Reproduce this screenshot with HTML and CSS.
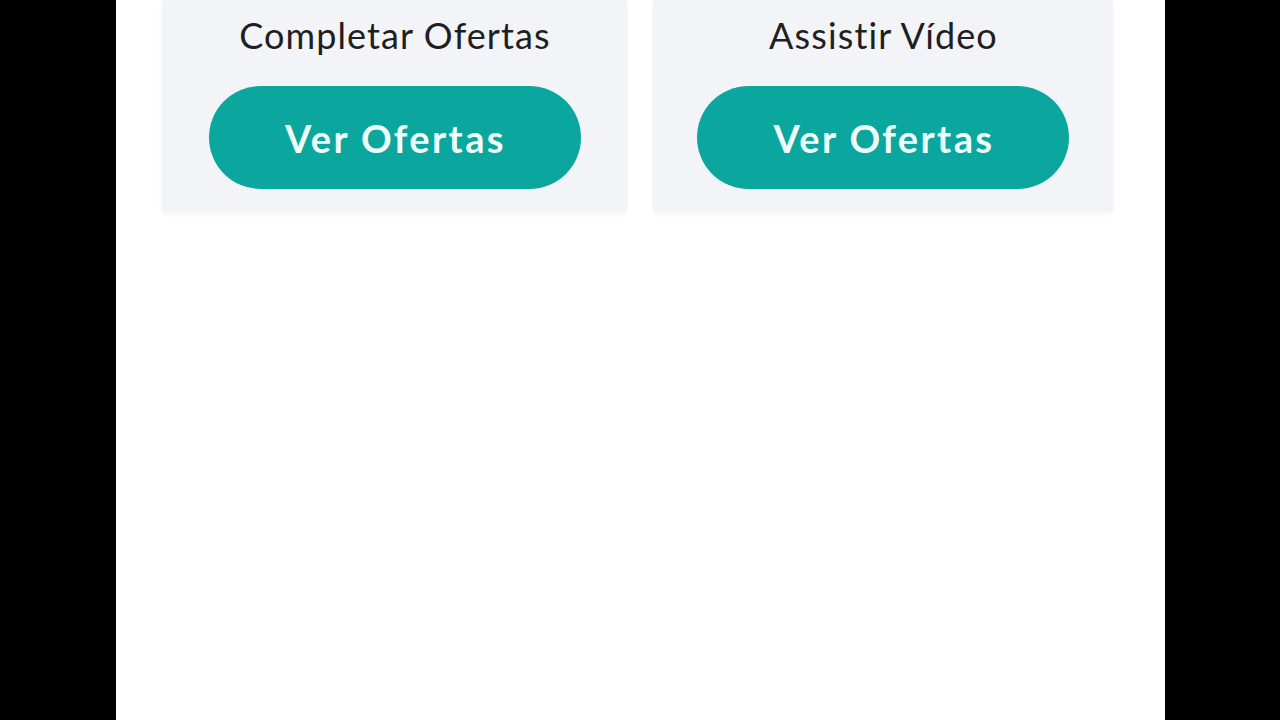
FILE: index.html
```html
<!DOCTYPE html>
<html lang="pt">
<head>
<meta charset="utf-8">
<title>Ofertas</title>
<link rel="stylesheet" href="styles.css">
</head>
<body>
  <main class="screen">
    <section class="tasks">
      <div class="task-card">
        <h3 class="task-title">Completar Ofertas</h3>
        <button class="task-btn">Ver Ofertas</button>
      </div>
      <div class="task-card">
        <h3 class="task-title">Assistir Vídeo</h3>
        <button class="task-btn">Ver Ofertas</button>
      </div>
    </section>
  </main>
</body>
</html>
```
FILE: styles.css
```css
* { box-sizing: border-box; }

html, body {
  margin: 0;
  height: 100%;
  background: #000;
}

.screen {
  width: 1049px;
  height: 720px;
  margin-left: 116px;
  background: #fff;
  padding: 0 52px 0 46px;
  overflow: hidden;
  font-family: Lato, "Open Sans", sans-serif;
}

.tasks {
  display: grid;
  grid-template-columns: 465px 460px;
  column-gap: 26px;
}

.task-card {
  background: #f3f4f7;
  display: flex;
  flex-direction: column;
  align-items: center;
  padding: 12px 0 23px;
  box-shadow: 0 2px 6px rgba(0, 0, 0, 0.04);
}

.task-title {
  margin: 0;
  padding-left: 1px;
  font-size: 36px;
  line-height: 46px;
  font-weight: 400;
  letter-spacing: 1.1px;
  color: #1f1f22;
}

.task-btn {
  margin-top: 28px;
  width: 372px;
  height: 103px;
  border: none;
  border-radius: 52px;
  background: #0ba79e;
  color: #f0fffc;
  font-family: Lato, "Open Sans", sans-serif;
  font-size: 38px;
  font-weight: 700;
  letter-spacing: 2.4px;
  padding: 0 0 0 2px;
  cursor: pointer;
}
```
